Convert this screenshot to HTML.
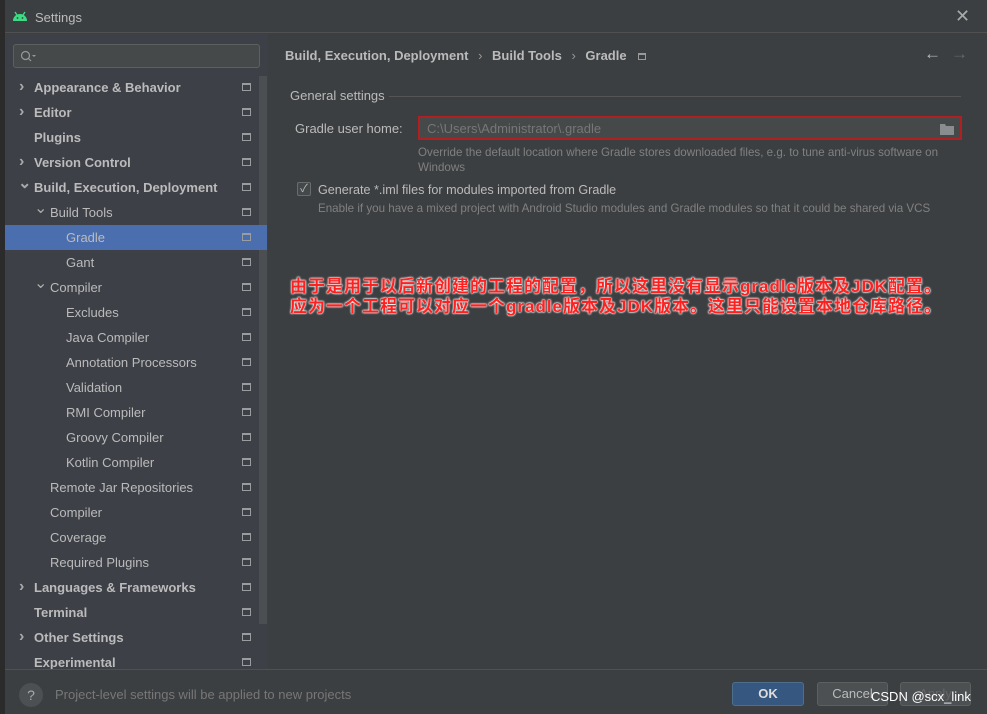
<!DOCTYPE html>
<html><head><meta charset="utf-8"><style>
*{margin:0;padding:0;box-sizing:border-box}
body{width:987px;height:714px;background:#2b2b2b;font-family:"Liberation Sans","Noto Sans CJK SC",sans-serif;font-size:13px;color:#bbbbbb;position:relative;overflow:hidden}
.win{position:absolute;left:5px;top:0;width:982px;height:714px;background:#3c3f41}
.title{position:absolute;left:0;top:0;width:982px;height:33px;background:#3c3f41;border-bottom:1px solid #515151}
.title span{position:absolute;left:30px;top:10px;font-size:13px;color:#bbb}
.side{position:absolute;left:0;top:34px;width:263px;height:635px;background:#3d4047}
.search{position:absolute;left:8px;top:10px;width:247px;height:24px;border:1px solid #5e6060;border-radius:3px;background:#45494a}
.row{position:absolute;left:0;width:263px;height:25px;line-height:25px;font-size:13px;color:#bbb}
.row.b{font-weight:bold}
.row.sel{background:#4b6eaf;width:262px}
.row .ic{position:absolute;left:237px;top:8px;width:9px;height:8px;border:1px solid #9a9da0;border-top-width:2px}
.arr{position:absolute;font-size:16px;color:#aaa;top:-1px}
.scroll{position:absolute;left:254px;top:76px;width:8px;height:548px;background:#4c4f52}
.main{position:absolute;left:263px;top:34px;width:719px;height:635px;background:#3c3f41}
.bottom{position:absolute;left:0;top:669px;width:982px;height:45px;background:#3c3f41;border-top:1px solid #515151}
.btn{position:absolute;top:12px;height:24px;border-radius:3px;border:1px solid #5e6060;background:#4c5052;text-align:center;line-height:22px;color:#bbb}
.red{position:absolute;color:#ff2020;font-weight:bold;font-size:17px;letter-spacing:1px;text-shadow:0 0 2px #fff,0 0 2px #fff,0 0 1px #fff;white-space:nowrap}
</style></head><body>
<div class="win">
<div class="title">
<svg style="position:absolute;left:7px;top:11px" width="16" height="10" viewBox="0 0 16 10"><path d="M1 10 A7 7 0 0 1 15 10Z" fill="#3ddc84"/><path d="M3 1 L5 4 M13 1 L11 4" stroke="#3ddc84" stroke-width="1.3"/><circle cx="5.5" cy="7" r=".9" fill="#3c3f41"/><circle cx="10.5" cy="7" r=".9" fill="#3c3f41"/></svg>
<span>Settings</span>
<span style="left:950px;top:6px;font-size:18px;color:#aaa">✕</span>
</div>
<div class="side">
<div class="search"><svg style="position:absolute;left:6px;top:5px" width="16" height="12"><circle cx="5.5" cy="5.5" r="4" fill="none" stroke="#999" stroke-width="1.2"/><path d="M8.5 8.5L11 11" stroke="#999" stroke-width="1.2"/><path d="M12 5h4l-2 2z" fill="#999"/></svg></div>
<div class="scroll" style="top:42px"></div>
</div>
<div class="main">
<div style="position:absolute;left:17px;top:14px;font-weight:bold;color:#bbb">Build, Execution, Deployment <span style="font-weight:normal;color:#999;margin:0 6px">›</span> Build Tools <span style="font-weight:normal;color:#999;margin:0 6px">›</span> Gradle</div>
<div style="position:absolute;left:370px;top:19px;width:8px;height:7px;border:1px solid #999;border-top-width:2px"></div>
<div style="position:absolute;left:656px;top:10px;font-size:17px;color:#bbb">←</div>
<div style="position:absolute;left:683px;top:10px;font-size:17px;color:#666">→</div>
<div style="position:absolute;left:22px;top:54px;color:#bbb">General settings</div>
<div style="position:absolute;left:121px;top:62px;width:572px;height:1px;background:#555"></div>
<div style="position:absolute;left:27px;top:87px;color:#bbb">Gradle user home:</div>
<div style="position:absolute;left:150px;top:82px;width:544px;height:24px;border:2px solid #b02020;background:#45494a"><span style="position:absolute;left:7px;top:3px;color:#777">C:\Users\Administrator\.gradle</span><svg style="position:absolute;right:5px;top:5px" width="15" height="12"><path d="M0 1h5l1 2h8v9H0z" fill="#8a8d90"/></svg></div>
<div style="position:absolute;left:150px;top:111px;width:550px;font-size:11.6px;line-height:15px;color:#808080">Override the default location where Gradle stores downloaded files, e.g. to tune anti-virus software on Windows</div>
<div style="position:absolute;left:29px;top:148px;width:14px;height:14px;border:1px solid #6b6b6b;border-radius:2px;background:#43494a;font-size:11px;line-height:12px;text-align:center;color:#bbb">✓</div>
<div style="position:absolute;left:50px;top:149px;color:#bbb;font-size:12.6px">Generate *.iml files for modules imported from Gradle</div>
<div style="position:absolute;left:50px;top:168px;font-size:11.6px;color:#808080">Enable if you have a mixed project with Android Studio modules and Gradle modules so that it could be shared via VCS</div>
</div>
<div class="red" style="top:272px;left:285px">由于是用于以后新创建的工程的配置，所以这里没有显示gradle版本及JDK配置。</div>
<div class="red" style="top:292px;left:285px">应为一个工程可以对应一个gradle版本及JDK版本。这里只能设置本地仓库路径。</div>
<div class="bottom">
<div style="position:absolute;left:14px;top:13px;width:24px;height:24px;border-radius:50%;background:#4c5052;color:#aaa;text-align:center;line-height:24px;font-size:14px">?</div>
<div style="position:absolute;left:50px;top:17px;color:#777">Project-level settings will be applied to new projects</div>
<div class="btn" style="left:727px;width:72px;background:#365880;border-color:#4c708c;font-weight:bold;color:#ddd">OK</div>
<div class="btn" style="left:812px;width:71px">Cancel</div>
<div class="btn" style="left:895px;width:71px;color:#666">Apply</div>
<div style="position:absolute;left:866px;top:19px;color:#fff;font-size:13px">CSDN @scx_link</div>
</div>
</div>
<div style="position:absolute;left:5px;top:0">
<div class="row b" style="top:75px"><span class="arr" style="left:14px">›</span><span style="position:absolute;left:29px">Appearance &amp; Behavior</span><i class="ic"></i></div>
<div class="row b" style="top:100px"><span class="arr" style="left:14px">›</span><span style="position:absolute;left:29px">Editor</span><i class="ic"></i></div>
<div class="row b" style="top:125px"><span style="position:absolute;left:29px">Plugins</span><i class="ic"></i></div>
<div class="row b" style="top:150px"><span class="arr" style="left:14px">›</span><span style="position:absolute;left:29px">Version Control</span><i class="ic"></i></div>
<div class="row b" style="top:175px"><span class="arr" style="left:13px;top:-4px">⌄</span><span style="position:absolute;left:29px">Build, Execution, Deployment</span><i class="ic"></i></div>
<div class="row" style="top:200px"><span class="arr" style="left:29px;top:-4px">⌄</span><span style="position:absolute;left:45px">Build Tools</span><i class="ic"></i></div>
<div class="row sel" style="top:225px"><span style="position:absolute;left:61px">Gradle</span><i class="ic"></i></div>
<div class="row" style="top:250px"><span style="position:absolute;left:61px">Gant</span><i class="ic"></i></div>
<div class="row" style="top:275px"><span class="arr" style="left:29px;top:-4px">⌄</span><span style="position:absolute;left:45px">Compiler</span><i class="ic"></i></div>
<div class="row" style="top:300px"><span style="position:absolute;left:61px">Excludes</span><i class="ic"></i></div>
<div class="row" style="top:325px"><span style="position:absolute;left:61px">Java Compiler</span><i class="ic"></i></div>
<div class="row" style="top:350px"><span style="position:absolute;left:61px">Annotation Processors</span><i class="ic"></i></div>
<div class="row" style="top:375px"><span style="position:absolute;left:61px">Validation</span><i class="ic"></i></div>
<div class="row" style="top:400px"><span style="position:absolute;left:61px">RMI Compiler</span><i class="ic"></i></div>
<div class="row" style="top:425px"><span style="position:absolute;left:61px">Groovy Compiler</span><i class="ic"></i></div>
<div class="row" style="top:450px"><span style="position:absolute;left:61px">Kotlin Compiler</span><i class="ic"></i></div>
<div class="row" style="top:475px"><span style="position:absolute;left:45px">Remote Jar Repositories</span><i class="ic"></i></div>
<div class="row" style="top:500px"><span style="position:absolute;left:45px">Compiler</span><i class="ic"></i></div>
<div class="row" style="top:525px"><span style="position:absolute;left:45px">Coverage</span><i class="ic"></i></div>
<div class="row" style="top:550px"><span style="position:absolute;left:45px">Required Plugins</span><i class="ic"></i></div>
<div class="row b" style="top:575px"><span class="arr" style="left:14px">›</span><span style="position:absolute;left:29px">Languages &amp; Frameworks</span><i class="ic"></i></div>
<div class="row b" style="top:600px"><span style="position:absolute;left:29px">Terminal</span><i class="ic"></i></div>
<div class="row b" style="top:625px"><span class="arr" style="left:14px">›</span><span style="position:absolute;left:29px">Other Settings</span><i class="ic"></i></div>
<div class="row b" style="top:650px;height:19px;overflow:hidden;line-height:25px"><span style="position:absolute;left:29px">Experimental</span><i class="ic"></i></div>
</div>
</body></html>
